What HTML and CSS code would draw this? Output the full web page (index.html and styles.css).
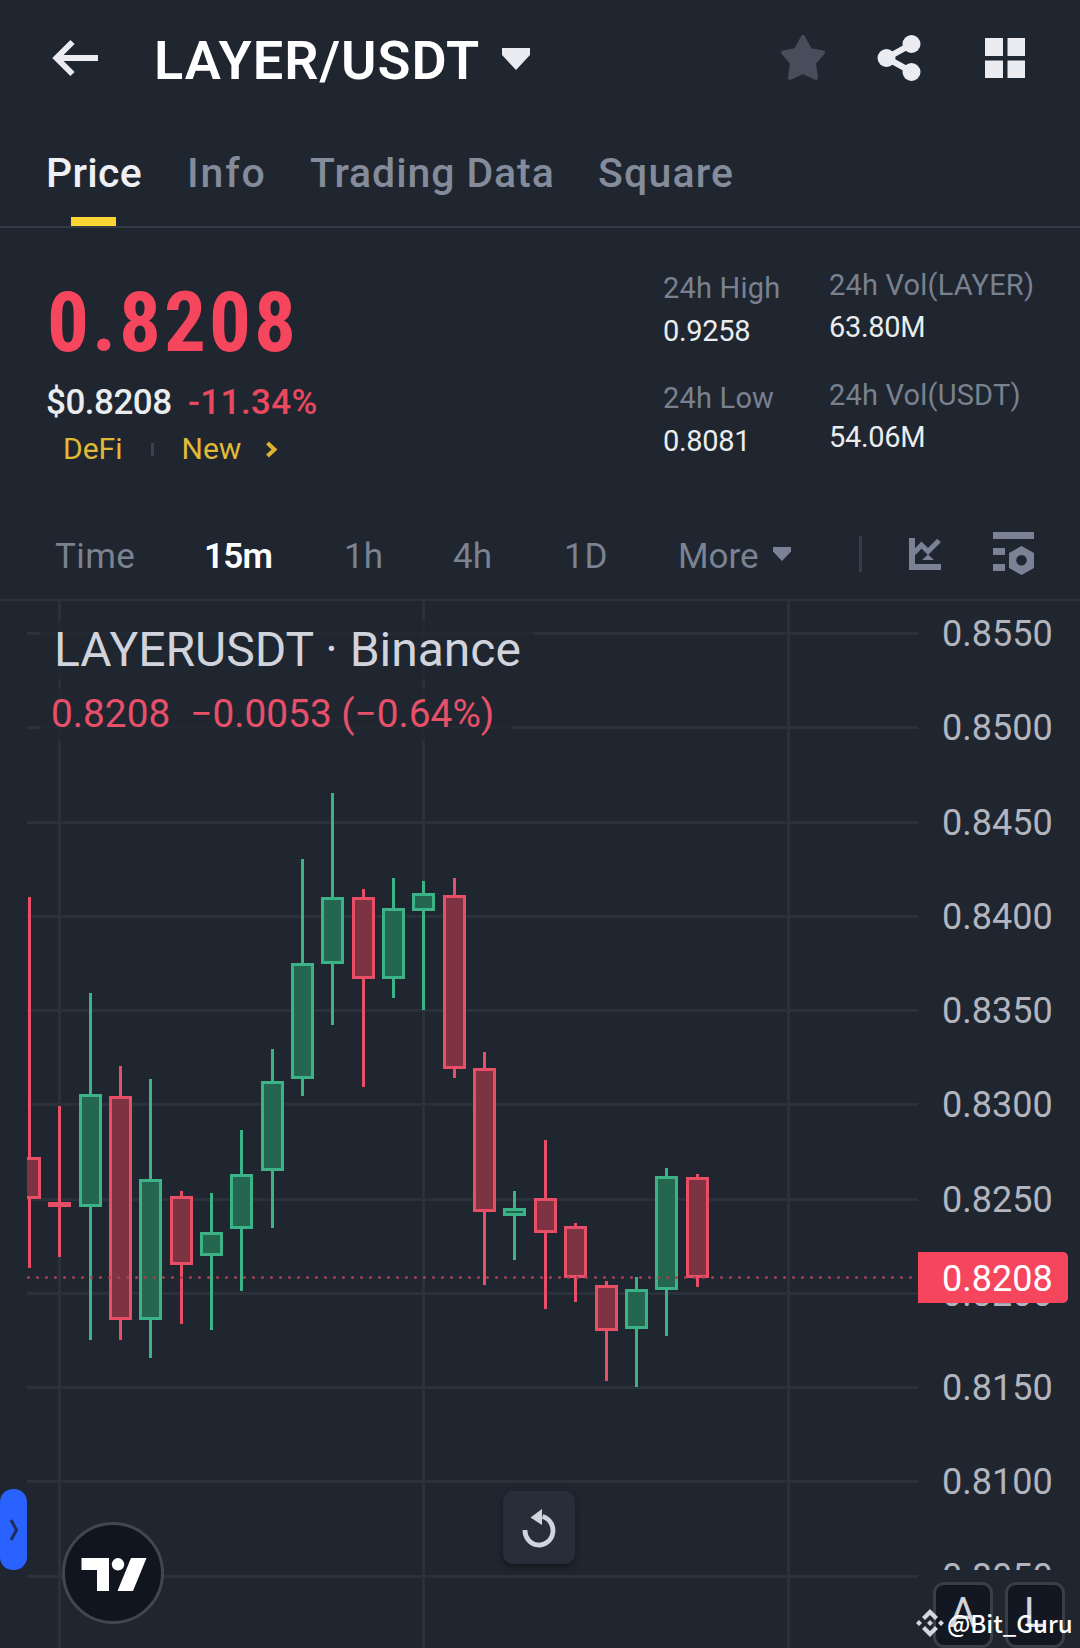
FILE: index.html
```html
<!DOCTYPE html>
<html lang="en">
<head>
  <meta charset="UTF-8">
  <title>LAYER/USDT</title>
  <link rel="stylesheet" href="styles.css">
</head>
<body>

  <!-- Header -->
  <header class="topbar">
    <svg class="back" width="48" height="38" viewBox="0 0 48 38">
      <path d="M46 19H5M20.500 3L4.500 19L20.500 35" />
    </svg>
    <h1>LAYER/USDT</h1>
    <svg class="caret" width="28" height="22" viewBox="0 0 28 22"><path d="M0 0H28V7L14 22L0 7Z" /></svg>
    <div class="actions">
      <svg width="46" height="48" viewBox="0 0 46 48">
        <path class="star" d="M23 3L30 16L43 18.500L34 29L36 44L23 38L10 44L12 29L3 18.500L16 16Z" />
      </svg>
      <svg width="44" height="48" viewBox="0 0 44 48">
        <path class="share-line" d="M35 10L9.500 24L35 38" />
        <circle cx="9.500" cy="24" r="9" /><circle cx="34.500" cy="10" r="9" /><circle cx="34.500" cy="38" r="9" />
      </svg>
      <svg width="40" height="40" viewBox="0 0 40 40">
        <path d="M0 0H18V18H0ZM22.500 0H40V18H22.500ZM0 22.500H18V40H0ZM22.500 22.500H40V40H22.500Z" />
      </svg>
    </div>
  </header>

  <!-- Tabs -->
  <nav class="tabs">
    <a class="tab tab-price active">Price</a>
    <a class="tab tab-info">Info</a>
    <a class="tab tab-data">Trading Data</a>
    <a class="tab tab-square">Square</a>
  </nav>

  <!-- Ticker -->
  <section class="ticker">
    <div class="quote">
      <div class="last">0.8208</div>
      <div class="fiat"><span class="usd">$0.8208</span><span class="pct">-11.34%</span></div>
      <div class="tags">
        <span>DeFi</span>
        <i class="tag-sep"></i>
        <span>New</span>
        <svg width="13" height="17" viewBox="0 0 13 17"><path d="M2.500 2L9.500 8.500L2.500 15" /></svg>
      </div>
    </div>
    <div class="stats stats-price">
      <div class="label">24h High</div>
      <div class="value">0.9258</div>
      <div class="label">24h Low</div>
      <div class="value">0.8081</div>
    </div>
    <div class="stats stats-vol">
      <div class="label">24h Vol(LAYER)</div>
      <div class="value">63.80M</div>
      <div class="label">24h Vol(USDT)</div>
      <div class="value">54.06M</div>
    </div>
  </section>

  <!-- Intervals -->
  <nav class="intervals">
    <a class="i-time">Time</a>
    <a class="i-15m active">15m</a>
    <a class="i-1h">1h</a>
    <a class="i-4h">4h</a>
    <a class="i-1d">1D</a>
    <a class="i-more">More</a>
    <svg class="i-caret" width="18" height="14" viewBox="0 0 18 14"><path d="M0 0H18V4.500L9 14L0 4.500Z" /></svg>
    <i class="i-sep"></i>
    <svg class="i-chart" width="32" height="32" viewBox="0 0 32 32">
      <path d="M0 0H6V26H32V32H0Z" />
      <path class="line" d="M5 15L12.500 7L19 13.500L30 2.500" />
      <path d="M19 16.500L25 22H13Z" />
    </svg>
    <svg class="i-settings" width="42" height="43" viewBox="0 0 42 43">
      <path d="M0 0H41V7H0ZM0 16H12V23H0ZM0 32H12V39H0Z" />
      <path fill-rule="evenodd" d="M28.500 14L41 21V36L28.500 43L16 36V21ZM28.500 23A5.300 5.300 0 1 0 28.500 33.600A5.300 5.300 0 1 0 28.500 23Z" />
    </svg>
  </nav>

  <!-- Chart -->
  <main class="chart">
    <svg class="plot" width="1080" height="1049" viewBox="0 599 1080 1049">
      <defs>
        <clipPath id="pane"><rect x="27" y="599" width="891" height="1049" /></clipPath>
        <clipPath id="axisClip"><rect x="918" y="599" width="162" height="971" /></clipPath>
      </defs>
      <g id="grid"></g>
      <g id="candles" clip-path="url(#pane)"></g>
      <path class="last-line" d="M28.500 1277.500H916" />
      <g id="axis" clip-path="url(#axisClip)"></g>
      <path class="last-tag" d="M918 1252H1063a5 5 0 0 1 5 5V1298a5 5 0 0 1 -5 5H918Z" />
      <text class="last-text" x="942" y="1291">0.8208</text>
    </svg>

    <div class="legend">
      <div class="legend-title">LAYERUSDT · Binance</div>
      <div class="legend-values"><span>0.8208</span><span>−0.0053 (−0.64%)</span></div>
    </div>

    <div class="drawer">
      <svg width="10" height="22" viewBox="0 0 10 22"><path d="M2 1L7.500 11L2 21" /></svg>
    </div>

    <svg class="tv-logo" width="104" height="104" viewBox="0 0 104 104">
      <circle class="ring" cx="52" cy="52" r="49.500" />
      <path d="M20.500 37H48V70H36V49H20.500ZM70 37H85.500L72 70H56.500Z" />
      <circle cx="57" cy="43.300" r="6.200" />
    </svg>

    <div class="reset">
      <svg width="34" height="40" viewBox="0 0 34 40">
        <path class="arc" d="M3 21A14 14.500 0 1 0 20.500 7.500" />
        <path d="M8.500 8.500L20 0V16Z" />
      </svg>
    </div>

    <div class="scale-btns"><b>A</b><b>L</b></div>

    <div class="watermark">
      <svg width="28" height="28" viewBox="0 0 28 28">
        <path d="M14 0L22 8L19 11L14 6L9 11L6 8ZM14 28L22 20L19 17L14 22L9 17L6 20ZM3 11L6 14L3 17L0 14ZM25 11L28 14L25 17L22 14ZM14 11L17 14L14 17L11 14Z" />
      </svg>
      <span>@Bit_Guru</span>
    </div>
  </main>

<script>
  const NS = "http://www.w3.org/2000/svg";

  // [x, high, body top, body bottom, low, direction]
  const candles = [
    [29.5, 897, 1157, 1199, 1268, "down"],
    [59.5, 1106, 1202, 1207, 1257, "down"],
    [90.5, 993, 1094, 1207, 1340, "up"],
    [120.5, 1066, 1096, 1320, 1340, "down"],
    [150.5, 1079, 1179, 1320, 1358, "up"],
    [181.5, 1191, 1196, 1265, 1324, "down"],
    [211.5, 1193, 1232, 1256, 1330, "up"],
    [241.5, 1130, 1174, 1229, 1291, "up"],
    [272.5, 1049, 1081, 1171, 1228, "up"],
    [302.5, 859, 963, 1079, 1096, "up"],
    [332.5, 793, 897, 964, 1025, "up"],
    [363.5, 889, 897, 979, 1087, "down"],
    [393.5, 878, 908, 979, 998, "up"],
    [423.5, 881, 893, 911, 1010, "up"],
    [454.5, 878, 895, 1069, 1078, "down"],
    [484.5, 1052, 1068, 1212, 1285, "down"],
    [514.5, 1191, 1208, 1216, 1260, "up"],
    [545.5, 1140, 1198, 1233, 1309, "down"],
    [575.5, 1223, 1226, 1278, 1302, "down"],
    [606.5, 1281, 1285, 1331, 1381, "down"],
    [636.5, 1277, 1289, 1329, 1387, "up"],
    [666.5, 1168, 1176, 1290, 1336, "up"],
    [697.5, 1174, 1177, 1278, 1287, "down"]
  ];

  function add(parent, tag, attrs) {
    const el = document.createElementNS(NS, tag);
    for (const key in attrs) el.setAttribute(key, attrs[key]);
    document.getElementById(parent).appendChild(el);
    return el;
  }

  // price levels, 0.0050 apart
  for (let i = 0; i < 11; i++) {
    const y = Math.round(633 + i * 94.25);
    add("grid", "path", { d: `M27 ${y + 0.5}H918` });
    add("axis", "text", { x: 942, y: y + 13 }).textContent = (0.855 - i * 0.005).toFixed(4);
  }
  [59.5, 423.5, 788.5].forEach(x => add("grid", "path", { d: `M${x} 599V1648` }));

  candles.forEach(([x, high, top, bottom, low, dir]) => {
    add("candles", "path", { class: dir, d: `M${x} ${high}V${top}M${x} ${bottom}V${low}` });
    add("candles", "rect", { class: dir, x: x - 10, y: top + 1.5, width: 20, height: bottom - top - 3 });
  });
</script>
</body>
</html>
```
FILE: styles.css
```css
* {
  box-sizing: border-box;
}

body {
  margin: 0;
  width: 1080px;
  height: 1648px;
  overflow: hidden;
  background: #1f2630;
  color: #eaecef;
  font-family: Roboto, "Liberation Sans", sans-serif;
}

svg {
  display: block;
  flex: none;
}

/* Header */
.topbar {
  display: flex;
  align-items: center;
  height: 116px;
  padding: 0 55px 0 52px;
  fill: #eaecf2;
}

.back path {
  fill: none;
  stroke: #eaecf2;
  stroke-width: 6;
}

.topbar h1 {
  margin: 5px 0 0 54px;
  width: 344px;
  font-size: 54px;
  line-height: 64px;
  font-weight: 600;
  letter-spacing: 1px;
  color: #fff;
}

.caret {
  margin: 2px 0 0 4px;
}

.actions {
  display: flex;
  align-items: center;
  margin-left: auto;
}

.actions svg + svg {
  margin-left: 51px;
}

.actions svg:last-child {
  margin-left: 64px;
}

.star {
  fill: #474d5b;
  stroke: #474d5b;
  stroke-width: 4;
  stroke-linejoin: round;
}

.share-line {
  fill: none;
  stroke: #eaecf2;
  stroke-width: 6;
}

/* Tabs */
.tabs {
  display: flex;
  height: 112px;
  padding: 32px 0 0 46px;
  border-bottom: 2px solid #343b46;
}

.tab {
  position: relative;
  height: 78px;
  font-size: 41px;
  line-height: 50px;
  font-weight: 500;
  letter-spacing: 0.9px;
  color: #848b9a;
  white-space: nowrap;
}

.tab-price {
  width: 141px;
  letter-spacing: 0.3px;
}

.tab-info {
  width: 123px;
  letter-spacing: 1.9px;
}

.tab-data { width: 288px; }
.tab-square { letter-spacing: 1.2px; }

.tab.active {
  color: #eef0f5;
}

.tab.active::after {
  content: "";
  position: absolute;
  left: 25px;
  bottom: 0;
  width: 45px;
  height: 9px;
  background: #fcd535;
}

/* Ticker */
.ticker {
  display: flex;
  height: 285px;
}

.quote {
  width: 663px;
  padding: 46px 0 0 47px;
}

.last {
  font-size: 83px;
  line-height: 98px;
  font-weight: 700;
  font-stretch: 75%;
  letter-spacing: 3px;
  color: #f6465d;
}

.fiat {
  display: flex;
  margin-top: 10px;
  font-size: 35px;
  line-height: 42px;
  font-weight: 500;
}

.usd {
  width: 142px;
  margin-left: -1px;
  letter-spacing: -0.5px;
}

.pct {
  color: #e9485f;
  letter-spacing: 0.4px;
}

.tags {
  display: flex;
  align-items: center;
  padding-left: 16px;
  margin-top: 7px;
  font-size: 30px;
  line-height: 36px;
  color: #e0b936;
}

.tag-sep {
  width: 3px;
  height: 13px;
  margin: 0 27px 0 29px;
  background: #3a424e;
}

.tags svg {
  margin-left: 24px;
  fill: none;
  stroke: #e0b22b;
  stroke-width: 4;
}

.stats {
  font-size: 29px;
  line-height: 34px;
}

.stats-price {
  width: 166px;
  padding-top: 43px;
}

.stats-vol {
  padding-top: 40px;
}

.label {
  color: #79818f;
  letter-spacing: 0.2px;
  white-space: nowrap;
}

.value {
  margin: 8px 0 34px;
  letter-spacing: -0.3px;
}

.stats-price .value {
  margin: 9px 0 33px;
}

/* Intervals */
.intervals {
  display: flex;
  align-items: center;
  height: 86px;
  padding: 0 0 5px 55px;
  font-size: 35px;
  line-height: 42px;
  color: #7b8291;
  fill: #7b8295;
}

.intervals a {
  padding-top: 6px;
}

.intervals .active {
  font-weight: 600;
  letter-spacing: -0.8px;
  color: #fff;
}

.i-time { width: 149px; letter-spacing: 0.4px; }
.i-15m { width: 140px; }
.i-1h { width: 109px; }
.i-4h { width: 111px; }
.i-1d { width: 114px; letter-spacing: 0.8px; }
.i-more { width: 95px; }

.i-sep {
  width: 3px;
  height: 36px;
  margin: 0 47px 0 68px;
  background: #353d48;
}

.i-chart .line {
  fill: none;
  stroke: #7b8295;
  stroke-width: 5;
}

.i-settings {
  margin-left: 52px;
}

/* Chart */
.chart {
  position: relative;
  height: 1049px;
  border-top: 2px solid #2a313b;
}

.plot {
  margin-top: -2px;
}

#grid path {
  stroke: #2a313b;
  stroke-width: 3;
}

#candles path,
#candles rect {
  stroke-width: 3;
}

#candles path { fill: none; }
#candles .up { stroke: #3cb387; }
#candles .down { stroke: #e84f66; }
#candles rect.up { fill: #246650; }
#candles rect.down { fill: #7d3342; }

.last-line {
  fill: none;
  stroke: #a83f50;
  stroke-width: 3;
  stroke-linecap: round;
  stroke-dasharray: 0 9;
}

#axis text {
  font-size: 36px;
  fill: #b2b5be;
}

.last-tag { fill: #f6465d; }

.last-text {
  font-size: 36px;
  fill: #fff;
}

.legend {
  position: absolute;
  left: 40px;
  top: 19px;
}

.legend-title,
.legend-values {
  width: max-content;
  background: rgba(31, 38, 48, 0.7);
}

.legend-title {
  padding: 0 12px 0 14px;
  font-size: 48px;
  line-height: 60px;
  color: #d1d4dc;
}

.legend-values {
  display: flex;
  gap: 20px;
  margin-top: 7px;
  padding: 0 18px 0 11px;
  font-size: 38.8px;
  line-height: 54px;
  color: #e8506a;
}

.drawer {
  position: absolute;
  left: 0;
  top: 888px;
  display: flex;
  align-items: center;
  width: 27px;
  height: 81px;
  padding-left: 9px;
  border-radius: 13px;
  background: #2962ff;
}

.drawer path {
  fill: none;
  stroke: #1e2d5c;
  stroke-width: 3;
}

.tv-logo {
  position: absolute;
  left: 60.5px;
  top: 920px;
  fill: #fff;
}

.tv-logo .ring {
  fill: #10151f;
  stroke: #434651;
  stroke-width: 3;
}

.reset {
  position: absolute;
  left: 503px;
  top: 890px;
  width: 72px;
  height: 73px;
  padding: 18px 0 0 19px;
  border-radius: 10px;
  background: #282e39;
  box-shadow: 0 3px 6px rgba(0, 0, 0, 0.4);
  fill: #d1d4dc;
}

.reset .arc {
  fill: none;
  stroke: #d1d4dc;
  stroke-width: 4.8;
}

.scale-btns {
  position: absolute;
  left: 933px;
  top: 981px;
  display: flex;
  gap: 12px;
}

.scale-btns b {
  width: 60px;
  height: 66px;
  border: 3px solid #3a3e49;
  border-radius: 11px;
  background: #131722;
  font-size: 42px;
  line-height: 56px;
  font-weight: 400;
  text-align: center;
  color: #d1d4dc;
}

.watermark {
  position: absolute;
  left: 916px;
  top: 1003px;
  display: flex;
  align-items: center;
  gap: 3px;
  font-family: "Noto Sans CJK SC", "Noto Sans", sans-serif;
  font-size: 24px;
  font-weight: 500;
  line-height: 38px;
  color: #fff;
  fill: #d5d7dd;
}
```
